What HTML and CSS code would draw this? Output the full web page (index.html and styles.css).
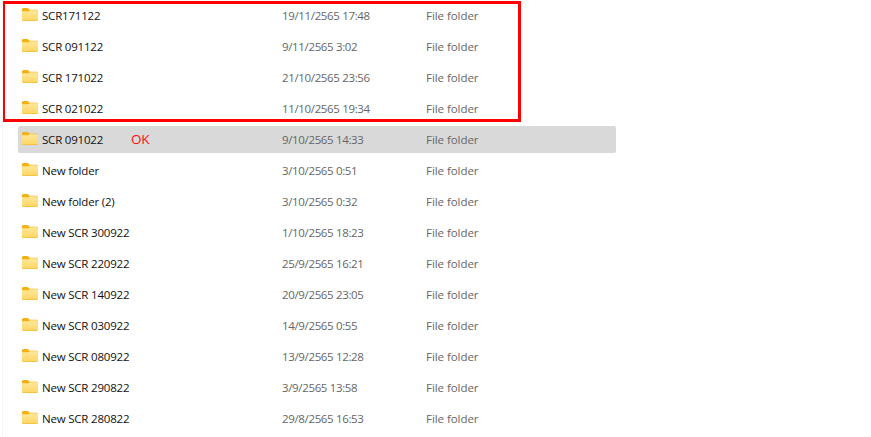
FILE: index.html
```html
<!DOCTYPE html>
<html lang="en">
<head>
<meta charset="utf-8">
<title>Folder list</title>
<link rel="stylesheet" href="styles.css">
</head>
<body>
<svg class="defs" width="0" height="0" aria-hidden="true">
  <defs>
    <linearGradient id="fg" x1="0" y1="0" x2="0" y2="1">
      <stop offset="0" stop-color="#ffe79a"/>
      <stop offset="1" stop-color="#fdd663"/>
    </linearGradient>
    <symbol id="folder" viewBox="0 0.5 16 13.5" preserveAspectRatio="none">
      <path d="M0 2.200C0 1.200.7.500 1.600.500h3.600c.5 0 .8.200 1.100.500L7.600 2.400H14.400c.9 0 1.600.7 1.600 1.600v2H0z" fill="#f4b10e"/>
      <path d="M0 3.900h6.400L8 2.900h6.400c.9 0 1.600.7 1.600 1.600v7.900c0 .9-.7 1.600-1.600 1.600H1.600C.7 14 0 13.300 0 12.400z" fill="url(#fg)"/>
      <path d="M0 12.400V13c.2.600.8 1 1.600 1h12.800c.8 0 1.400-.4 1.600-1v-.6c0 .9-.7 1-1.600 1H1.600C.7 13.400 0 13.300 0 12.400z" fill="#eeb01f"/>
    </symbol>
  </defs>
</svg>
<main class="list">
  <div class="row"><svg class="ico"><use href="#folder"/></svg><span class="name">SCR171122</span><span class="date">19/11/2565 17:48</span><span class="type">File folder</span></div>
  <div class="row"><svg class="ico"><use href="#folder"/></svg><span class="name">SCR 091122</span><span class="date">9/11/2565 3:02</span><span class="type">File folder</span></div>
  <div class="row"><svg class="ico"><use href="#folder"/></svg><span class="name">SCR 171022</span><span class="date">21/10/2565 23:56</span><span class="type">File folder</span></div>
  <div class="row"><svg class="ico"><use href="#folder"/></svg><span class="name">SCR 021022</span><span class="date">11/10/2565 19:34</span><span class="type">File folder</span></div>
  <div class="row selected"><svg class="ico"><use href="#folder"/></svg><span class="name">SCR 091022<em class="ok">OK</em></span><span class="date">9/10/2565 14:33</span><span class="type">File folder</span></div>
  <div class="row"><svg class="ico"><use href="#folder"/></svg><span class="name">New folder</span><span class="date">3/10/2565 0:51</span><span class="type">File folder</span></div>
  <div class="row"><svg class="ico"><use href="#folder"/></svg><span class="name">New folder (2)</span><span class="date">3/10/2565 0:32</span><span class="type">File folder</span></div>
  <div class="row"><svg class="ico"><use href="#folder"/></svg><span class="name">New SCR 300922</span><span class="date">1/10/2565 18:23</span><span class="type">File folder</span></div>
  <div class="row"><svg class="ico"><use href="#folder"/></svg><span class="name">New SCR 220922</span><span class="date">25/9/2565 16:21</span><span class="type">File folder</span></div>
  <div class="row"><svg class="ico"><use href="#folder"/></svg><span class="name">New SCR 140922</span><span class="date">20/9/2565 23:05</span><span class="type">File folder</span></div>
  <div class="row"><svg class="ico"><use href="#folder"/></svg><span class="name">New SCR 030922</span><span class="date">14/9/2565 0:55</span><span class="type">File folder</span></div>
  <div class="row"><svg class="ico"><use href="#folder"/></svg><span class="name">New SCR 080922</span><span class="date">13/9/2565 12:28</span><span class="type">File folder</span></div>
  <div class="row"><svg class="ico"><use href="#folder"/></svg><span class="name">New SCR 290822</span><span class="date">3/9/2565 13:58</span><span class="type">File folder</span></div>
  <div class="row"><svg class="ico"><use href="#folder"/></svg><span class="name">New SCR 280822</span><span class="date">29/8/2565 16:53</span><span class="type">File folder</span></div>
  <div class="mark"></div>
</main>
</body>
</html>
```
FILE: styles.css
```css
html, body { margin: 0; padding: 0; background: #fff; height: 100%; overflow: hidden; }
.defs { position: absolute; }
.list {
  position: relative;
  display: flex;
  flex-direction: column;
  gap: 4px;
  width: 598px;
  height: 435px;
  margin-left: 2px;
  padding: 2px 0 0 15px;
  border-left: 1px solid #f5f5f5;
  overflow: hidden;
  font: 11.5px/27px "Open Sans", sans-serif;
}
.row {
  display: flex;
  align-items: center;
  flex: none;
  height: 27px;
  padding-left: 4px;
  border-radius: 2px;
  color: #111;
}
.selected { background: #d9d9d9; }
.ico { width: 16px; height: 13px; flex: none; margin-top: -2px; }
.name { width: 240px; margin-left: 4px; flex: none; position: relative; letter-spacing: -0.2px; }
.date { width: 144px; flex: none; color: #666; letter-spacing: -0.35px; }
.type { color: #666; letter-spacing: -0.05px; }
.ok {
  position: absolute;
  left: 89px;
  top: 0;
  font-style: normal;
  font-size: 13.5px;
  letter-spacing: -0.2px;
  color: #ff0f0f;
}
.mark {
  position: absolute;
  left: -1px;
  top: 1px;
  width: 513px;
  height: 115px;
  border: 3px solid #f00;
}
```
